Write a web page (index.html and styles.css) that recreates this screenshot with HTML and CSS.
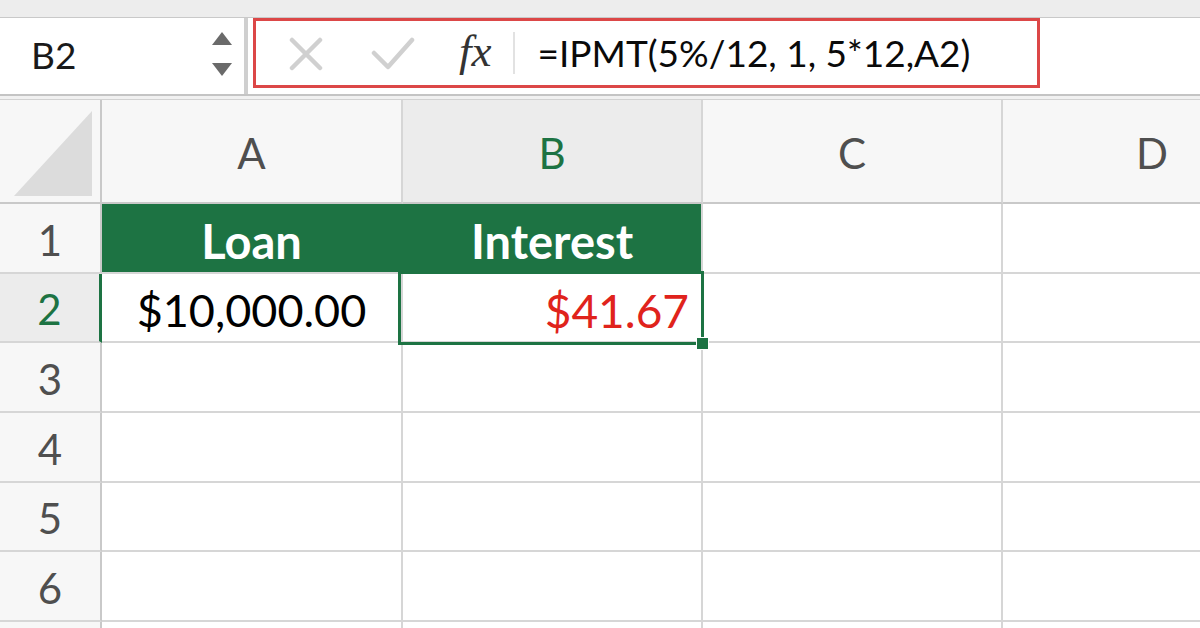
FILE: index.html
```html
<!DOCTYPE html>
<html lang="en">
<head>
    <meta charset="UTF-8">
    <meta name="viewport" content="width=device-width, initial-scale=1.0">
    <title>IPMT example</title>
    <link rel="stylesheet" href="styles.css">
</head>
<body>
    <div class="topbar"></div>

    <!-- Name box + formula bar -->
    <div class="formula-bar">
        <div class="name-box">
            <span class="cell-ref">B2</span>
            <div class="spinner">
                <span class="arrow up"></span>
                <span class="arrow down"></span>
            </div>
        </div>
        <div class="divider"></div>
        <div class="formula-box">
            <svg class="icon-cancel" width="34" height="34" viewBox="0 0 34 34">
                <path d="M3 3 L31 31 M31 3 L3 31" stroke="#d0d0d0" stroke-width="4.5" stroke-linecap="round" fill="none"/>
            </svg>
            <svg class="icon-enter" width="44" height="34" viewBox="0 0 44 34">
                <path d="M3 16 L17 30 L41 3" stroke="#d0d0d0" stroke-width="4.5" stroke-linecap="round" stroke-linejoin="round" fill="none"/>
            </svg>
            <span class="fx">fx</span>
            <span class="fx-sep"></span>
            <span class="formula">=IPMT(5%/12, 1, 5*12,A2)</span>
        </div>
    </div>

    <div class="gap"></div>

    <!-- Sheet grid -->
    <div class="sheet">
        <div class="corner"><span class="corner-tri"></span></div>
        <div class="col-head">A</div>
        <div class="col-head active">B</div>
        <div class="col-head">C</div>
        <div class="col-head">D</div>

        <div class="row-head">1</div>
        <div class="cell title">Loan</div>
        <div class="cell title last-title">Interest</div>
        <div class="cell"></div>
        <div class="cell"></div>

        <div class="row-head active">2</div>
        <div class="cell center">$10,000.00</div>
        <div class="cell right negative selected">$41.67<span class="selection"><span class="handle"></span></span></div>
        <div class="cell"></div>
        <div class="cell"></div>

        <div class="row-head">3</div>
        <div class="cell"></div>
        <div class="cell"></div>
        <div class="cell"></div>
        <div class="cell"></div>

        <div class="row-head">4</div>
        <div class="cell"></div>
        <div class="cell"></div>
        <div class="cell"></div>
        <div class="cell"></div>

        <div class="row-head">5</div>
        <div class="cell"></div>
        <div class="cell"></div>
        <div class="cell"></div>
        <div class="cell"></div>

        <div class="row-head">6</div>
        <div class="cell"></div>
        <div class="cell"></div>
        <div class="cell"></div>
        <div class="cell"></div>

        <!-- row 7 only peeks in at the bottom edge -->
        <div class="row-head"></div>
        <div class="cell"></div>
        <div class="cell"></div>
        <div class="cell"></div>
        <div class="cell"></div>
    </div>
</body>
</html>
```

FILE: styles.css
```css
* {
    box-sizing: border-box;
}

body {
    margin: 0;
    width: 1200px;
    height: 628px;
    overflow: hidden;
    background-color: #fff;
    font-family: 'Lato', 'Liberation Sans', Arial, sans-serif;
    color: #000;
}

.topbar {
    height: 18px;
    background-color: #ededed;
    border-bottom: 1px solid #c9c9c9;
}

/* Formula bar */
.formula-bar {
    display: flex;
    align-items: center;
    height: 78px;
    background-color: #fff;
    border-bottom: 2px solid #c4c4c4;
}

.name-box {
    width: 244px;
    height: 100%;
    display: flex;
    align-items: center;
    justify-content: space-between;
    padding: 0 12px 0 31px;
}

.cell-ref {
    font-size: 37px;
    color: #1a1a1a;
    margin-top: -4px;
}

.spinner {
    display: flex;
    flex-direction: column;
    gap: 18px;
    margin-top: -4px;
}

.arrow {
    width: 0;
    height: 0;
    border-left: 10px solid transparent;
    border-right: 10px solid transparent;
}

.arrow.up {
    border-bottom: 13px solid #6a6a6a;
}

.arrow.down {
    border-top: 13px solid #6a6a6a;
}

.divider {
    width: 4px;
    height: 100%;
    background-color: #cfcfcf;
}

.formula-box {
    display: flex;
    align-items: center;
    width: 787px;
    height: 70px;
    margin-left: 5px;
    margin-top: -6px;
    border: 3px solid #dc4747;
    padding-left: 33px;
}

.icon-cancel {
    margin-top: 2px;
}

.icon-enter {
    margin-left: 48px;
    margin-top: 2px;
}

.fx {
    font-family: 'Liberation Serif', 'Times New Roman', serif;
    font-style: italic;
    font-size: 45px;
    color: #333;
    margin-left: 44px;
    margin-top: -4px;
}

.fx-sep {
    width: 2px;
    height: 42px;
    background-color: #e2e2e2;
    margin-left: 22px;
}

.formula {
    font-size: 37px;
    color: #0a0a0a;
    margin-left: 22px;
    margin-top: -2px;
    white-space: nowrap;
}

.gap {
    height: 4px;
    background-color: #f1f1f1;
    border-bottom: 1px solid #d2d2d2;
}

/* Sheet */
.sheet {
    display: grid;
    grid-template-columns: 102px 301px 300px 300px 300px;
    grid-template-rows: 104px repeat(7, 69.67px);
}

.corner,
.col-head,
.row-head,
.cell {
    border-right: 2px solid #d6d6d6;
    border-bottom: 2px solid #d6d6d6;
}

.corner {
    background-color: #f7f7f7;
    border-right-color: #c9c9c9;
    border-bottom-color: #c9c9c9;
    padding: 11px 8px 6px 14px;
}

.corner-tri {
    display: block;
    width: 100%;
    height: 100%;
    background-color: #dcdcdc;
    clip-path: polygon(100% 0, 100% 100%, 0 100%);
}

.col-head {
    background-color: #f7f7f7;
    display: flex;
    align-items: center;
    justify-content: center;
    font-size: 42px;
    color: #4f4f4f;
    border-bottom-color: #c9c9c9;
    padding-top: 4px;
}

.col-head.active {
    background-color: #ececec;
    color: #1d7343;
}

.row-head {
    background-color: #f7f7f7;
    display: flex;
    align-items: center;
    justify-content: center;
    font-size: 42px;
    color: #4f4f4f;
    border-right-color: #c9c9c9;
    padding-top: 4px;
}

.row-head.active {
    background-color: #ececec;
    color: #1d7343;
    border-right: 3px solid #1d7343;
}

.cell {
    display: flex;
    align-items: center;
    font-size: 45px;
    padding-top: 6px;
}

.cell.title {
    background-color: #1d7343;
    border-right-color: #1d7343;
    color: #fff;
    font-weight: bold;
    justify-content: center;
    font-size: 47px;
}

.cell.title.last-title {
    border-right-color: #d6d6d6;
}

.cell.center {
    justify-content: center;
}

.cell.right {
    justify-content: flex-end;
    padding-right: 12px;
}

.cell.negative {
    color: #e0231c;
    font-size: 46px;
}

.cell.selected {
    position: relative;
}

.selection {
    position: absolute;
    top: -3px;
    left: -5px;
    right: -3px;
    bottom: -4px;
    border: 3px solid #1d7343;
}

.handle {
    position: absolute;
    right: -8px;
    bottom: -8px;
    width: 13px;
    height: 13px;
    background-color: #1d7343;
    border: 1px solid #fff;
}
```
